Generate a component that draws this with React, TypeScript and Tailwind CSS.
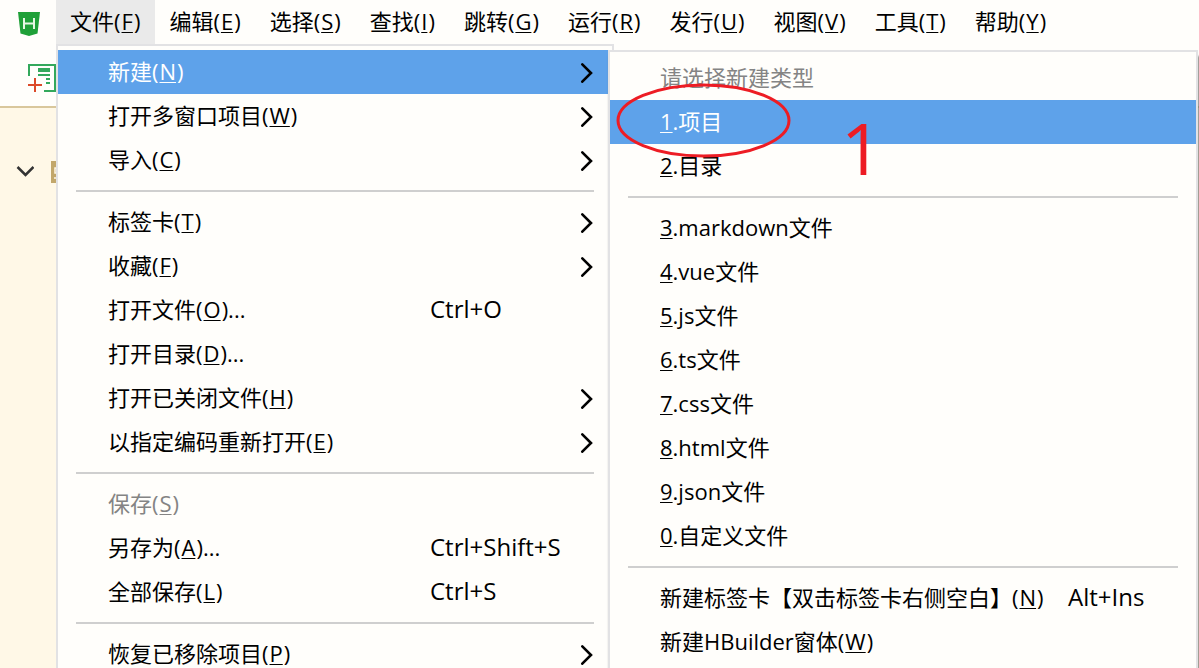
import React from "react";

type Entry =
  | { kind: "separator" }
  | {
      kind: "item";
      before: string;
      mnemonic?: string;
      after?: string;
      shortcut?: string;
      submenu?: boolean;
      active?: boolean;
      disabled?: boolean;
    };

const separator: Entry = { kind: "separator" };

const item = (
  before: string,
  mnemonic = "",
  after = "",
  options: { shortcut?: string; submenu?: boolean; active?: boolean; disabled?: boolean } = {},
): Entry => ({ kind: "item", before, mnemonic, after, ...options });

const menuBar: [string, string][] = [
  ["文件", "F"],
  ["编辑", "E"],
  ["选择", "S"],
  ["查找", "I"],
  ["跳转", "G"],
  ["运行", "R"],
  ["发行", "U"],
  ["视图", "V"],
  ["工具", "T"],
  ["帮助", "Y"],
];

const fileMenu: Entry[] = [
  item("新建(", "N", ")", { submenu: true, active: true }),
  item("打开多窗口项目(", "W", ")", { submenu: true }),
  item("导入(", "C", ")", { submenu: true }),
  separator,
  item("标签卡(", "T", ")", { submenu: true }),
  item("收藏(", "F", ")", { submenu: true }),
  item("打开文件(", "O", ")...", { shortcut: "Ctrl+O" }),
  item("打开目录(", "D", ")..."),
  item("打开已关闭文件(", "H", ")", { submenu: true }),
  item("以指定编码重新打开(", "E", ")", { submenu: true }),
  separator,
  item("保存(", "S", ")", { disabled: true }),
  item("另存为(", "A", ")...", { shortcut: "Ctrl+Shift+S" }),
  item("全部保存(", "L", ")", { shortcut: "Ctrl+S" }),
  separator,
  item("恢复已移除项目(", "P", ")", { submenu: true }),
];

const newMenu: Entry[] = [
  item("请选择新建类型", "", "", { disabled: true }),
  item("", "1", ".项目", { active: true }),
  item("", "2", ".目录"),
  separator,
  item("", "3", ".markdown文件"),
  item("", "4", ".vue文件"),
  item("", "5", ".js文件"),
  item("", "6", ".ts文件"),
  item("", "7", ".css文件"),
  item("", "8", ".html文件"),
  item("", "9", ".json文件"),
  item("", "0", ".自定义文件"),
  separator,
  item("新建标签卡【双击标签卡右侧空白】(", "N", ")", { shortcut: "Alt+Ins" }),
  item("新建HBuilder窗体(", "W", ")"),
];

function Mnemonic({ children, leading = false }: { children: string; leading?: boolean }) {
  return (
    <span className={`underline decoration-1 underline-offset-2 ${leading ? "" : "px-px"}`}>{children}</span>
  );
}

function Menu({ label, entries, columns }: { label: string; entries: Entry[]; columns: string }) {
  return (
    <ul role="menu" aria-label={label} className="border-2 border-[#e2e2e4] bg-[#fffefb] py-1">
      {entries.map((entry, index) =>
        entry.kind === "separator" ? (
          <li key={index} role="separator" className="mx-[18px] my-2 h-0.5 bg-[#cfcfcf]" />
        ) : (
          <li key={index} role="none">
            <button
              role="menuitem"
              disabled={entry.disabled}
              className={`grid h-11 w-full items-center pr-[18px] pl-[50px] text-left whitespace-nowrap ${columns} ${
                entry.active ? "bg-[#5ea2ea] text-white" : entry.disabled ? "text-[#848484]" : "text-black"
              }`}
            >
              <span className="pb-0.5">
                {entry.before}
                {entry.mnemonic && <Mnemonic leading={entry.before === ""}>{entry.mnemonic}</Mnemonic>}
                {entry.after}
              </span>
              <span className="pb-0.5 text-2xl">{entry.shortcut}</span>
              {entry.submenu && (
                <svg viewBox="0 0 14 22" className="h-[22px] w-3.5 text-black" fill="none" stroke="currentColor" strokeWidth="2.6">
                  <path d="M3.300 3.300 L12 12 L3.300 20.700" strokeLinecap="round" />
                </svg>
              )}
            </button>
          </li>
        ),
      )}
    </ul>
  );
}

function AppLogo() {
  return (
    <svg viewBox="0 0 22 24" className="h-6 w-[22px]">
      <path d="M0 0H22L19.5 21.5L11 24L2.5 21.5Z" fill="#1fa038" />
      <path d="M6 6V17M16 6V17M6 11.5H16" stroke="#e6f7e4" strokeWidth="2" fill="none" />
    </svg>
  );
}

function NewFileIcon() {
  return (
    <svg viewBox="0 0 28 28" className="h-7 w-7" fill="none">
      <path d="M1 12V1H27V27H16" stroke="#33a85c" strokeWidth="2" />
      <path d="M10 6H22" stroke="#33a85c" strokeWidth="4" />
      <path d="M10 11H22M18 15H22M18 19H22" stroke="#33a85c" strokeWidth="2" />
      <path d="M7 14V28M0 21H14" stroke="#dc4a2a" strokeWidth="2" />
    </svg>
  );
}

export default function App() {
  return (
    <div className="relative flex h-screen flex-col overflow-hidden bg-[#fffefb] font-['Open_Sans','Noto_Sans_CJK_SC',sans-serif] text-[22px] text-black">
      <header className="flex h-11 shrink-0">
        <div className="flex w-14 shrink-0 items-center pt-1 pl-[18px]">
          <AppLogo />
        </div>
        <nav aria-label="主菜单" className="flex">
          {menuBar.map(([name, key], index) => (
            <button
              key={key}
              className={`pr-[15px] pb-0.5 pl-[14px] whitespace-nowrap ${index === 0 ? "bg-[#eaeaea]" : ""}`}
            >
              {name}(<Mnemonic>{key}</Mnemonic>)
            </button>
          ))}
        </nav>
      </header>

      <div className="flex h-16 shrink-0 items-end border-b-2 border-[#d9c79c] pb-3.5 pl-7">
        <button aria-label="新建文件">
          <NewFileIcon />
        </button>
      </div>

      <main className="grow bg-[#fff8e7] pt-[53px] pl-4">
        <button aria-label="展开项目" className="flex items-center gap-[17px]">
          <svg viewBox="0 0 18 22" className="h-[22px] w-[18px]" fill="none">
            <path d="M1.500 6L9.500 14L17.500 6" stroke="#333333" strokeWidth="2.500" />
          </svg>
          <svg viewBox="0 0 22 22" className="h-[22px] w-[22px]" fill="none">
            <path d="M0 0H22V22H0Z" fill="#c2a76b" />
            <path d="M10 7H4V12H10M3 17H12" stroke="#fff8e7" strokeWidth="1.500" />
          </svg>
        </button>
      </main>

      <div className="absolute top-11 left-14 w-[558px]">
        <Menu label="文件" entries={fileMenu} columns="grid-cols-[322px_149px_14px]" />
      </div>

      <div className="absolute top-[50px] right-px left-[608px] h-screen shadow-[1px_6px_2px_#77756f]">
        <Menu label="新建" entries={newMenu} columns="grid-cols-[408px_1fr]" />
      </div>

      <svg viewBox="0 0 176 76" className="pointer-events-none absolute top-[83px] left-[616px] h-[76px] w-44" fill="none">
        <ellipse cx="87.5" cy="37.5" rx="85.5" ry="35.5" stroke="#ed1c24" strokeWidth="3" />
      </svg>
      <span className="pointer-events-none absolute top-[111px] left-[841px] text-[72px] leading-[72px] font-medium text-[#ed1c24]">
        1
      </span>
    </div>
  );
}
